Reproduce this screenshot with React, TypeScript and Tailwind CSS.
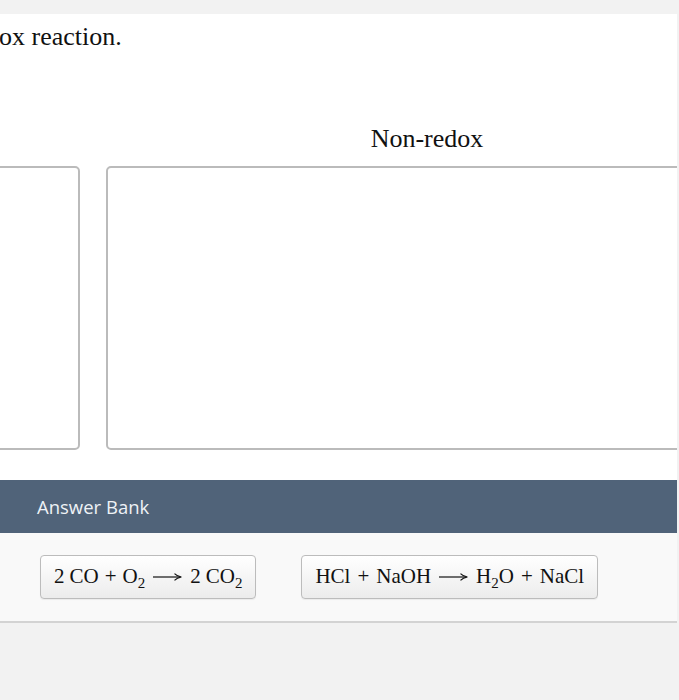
import React from "react";

// Long right arrow used between the two sides of an equation
function Arrow() {
  return (
    <svg width="29" height="10" viewBox="0 0 29 10" className="mx-[8px] inline-block self-center">
      <line x1="0" y1="5" x2="27" y2="5" stroke="#111" strokeWidth="1.2" />
      <path d="M21.5 1.6 Q24 4.2 28.4 5 Q24 5.8 21.5 8.4" fill="none" stroke="#111" strokeWidth="1.2" />
    </svg>
  );
}

function Sub({ children }: { children: React.ReactNode }) {
  return <span className="relative top-[6px] text-[15px] leading-none">{children}</span>;
}

function Chip({ children }: { children: React.ReactNode }) {
  return (
    <div className="flex h-[44px] items-center rounded-[4px] border border-[#bcbcbc] bg-gradient-to-b from-white to-[#ececec] px-[13px] font-['Liberation_Serif',serif] text-[21px] text-[#111] shadow-[0_1px_1px_rgba(0,0,0,0.06)]">
      {children}
    </div>
  );
}

export default function App() {
  return (
    <div className="h-[700px] w-[679px] overflow-hidden bg-[#f2f2f2]">
      <div className="h-[14px]" />
      <div className="w-[677px] overflow-hidden bg-white">
        {/* prompt line, scrolled so only its tail shows */}
        <p className="pt-[8px] pl-0 font-['Liberation_Serif',serif] text-[26px] leading-[30px] text-[#111]">
          <span className="-ml-[1px]">ox reaction.</span>
        </p>

        {/* bins */}
        <div className="mt-[72px] flex gap-[26px]">
          <div className="-ml-[200px] flex w-[280px] shrink-0 flex-col">
            <div className="h-[30px]" />
            <div className="mt-[12px] h-[284px] rounded-[5px] border-2 border-[#bbbbbb]" />
          </div>
          <div className="flex w-[642px] shrink-0 flex-col">
            <div className="text-center font-['Liberation_Serif',serif] text-[26px] leading-[30px] text-[#111]">
              Non-redox
            </div>
            <div className="mt-[12px] h-[284px] rounded-[5px] border-2 border-[#bbbbbb]" />
          </div>
        </div>

        <div className="h-[30px]" />

        {/* answer bank */}
        <div className="flex h-[53px] items-center bg-[#506379] pl-[37px] font-['Open_Sans',sans-serif] text-[18.5px] text-[#eef2f6]">
          Answer Bank
        </div>
        <div className="flex h-[90px] items-center gap-[45px] border-b-2 border-[#d3d3d3] bg-[#f9f9f9] pl-[40px]">
          <Chip>
            <span>2</span>
            <span className="ml-[5px]">CO</span>
            <span className="mx-[6px]">+</span>
            <span>O</span>
            <Sub>2</Sub>
            <Arrow />
            <span>2</span>
            <span className="ml-[5px]">CO</span>
            <Sub>2</Sub>
          </Chip>
          <Chip>
            <span>HCl</span>
            <span className="mx-[7px]">+</span>
            <span>NaOH</span>
            <Arrow />
            <span>H</span>
            <Sub>2</Sub>
            <span>O</span>
            <span className="mx-[7px]">+</span>
            <span>NaCl</span>
          </Chip>
        </div>
      </div>
    </div>
  );
}
